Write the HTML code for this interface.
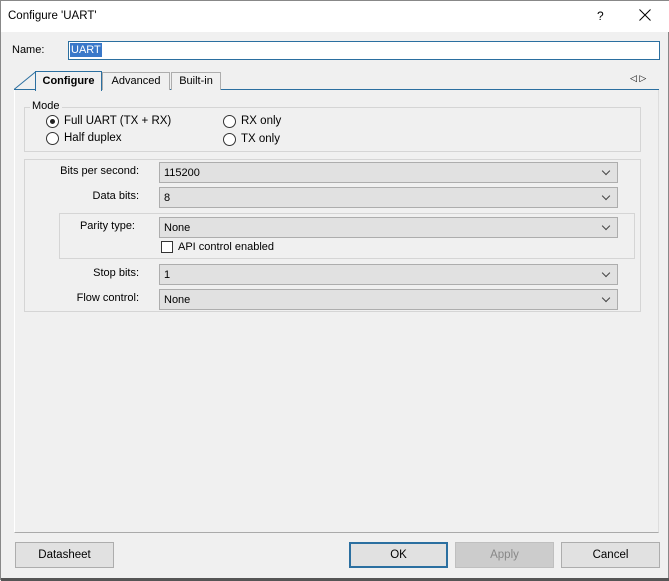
<!DOCTYPE html>
<html><head><style>
*{box-sizing:border-box;margin:0;padding:0}
body{width:669px;height:580px;overflow:hidden;background:#f0f0f0;font-family:"Liberation Sans",sans-serif;font-size:11.5px;color:#000;position:relative;border:1px solid #888}
.a{position:absolute}
.combo{position:absolute;left:158px;width:459px;height:21px;background:#e1e1e1;border:1px solid #adadad;padding:4px 0 0 4px;font-size:11px}
.combo:after{content:"";position:absolute;right:8px;top:5px;width:5px;height:5px;border-right:1px solid #444;border-bottom:1px solid #444;transform:rotate(45deg)}
.lbl{position:absolute;text-align:right;width:130px;left:8px;font-size:11px}
.radio{position:absolute;width:13px;height:13px;border:1px solid #333;border-radius:50%;background:#fff}
.btn{position:absolute;top:541px;height:26px;width:99px;background:#e1e1e1;border:1px solid #adadad;text-align:center;padding-top:6px;font-size:11.5px}
</style></head><body>
<div class="a" style="left:0;top:0;width:669px;height:31px;background:#fff"></div>
<div class="a" style="left:7px;top:9px;font-size:11.5px">Configure 'UART'</div>
<div class="a" style="left:596px;top:8px;font-size:12px">?</div>
<svg class="a" style="left:638px;top:8px" width="12" height="12"><path d="M0.5 0.5L11.5 11.5M11.5 0.5L0.5 11.5" stroke="#000" stroke-width="1"/></svg>
<div class="a" style="left:11px;top:43px;font-size:11px">Name:</div>
<div class="a" style="left:67px;top:40px;width:592px;height:19px;background:#fff;border:1px solid #2b6fa0"></div>
<div class="a" style="left:69px;top:42px;background:#3a78c9;color:#fff;padding:0 1px;height:14px;line-height:14px;font-size:11px">UART</div>
<div class="a" style="left:13px;top:88px;width:645px;height:1px;background:#2b6fa0"></div>
<div class="a" style="left:101px;top:71px;width:68px;height:18px;border:1px solid #adadad;border-bottom:none;background:#f0f0f0;text-align:center;padding-top:2px;font-size:11px">Advanced</div>
<div class="a" style="left:170px;top:71px;width:50px;height:18px;border:1px solid #adadad;border-bottom:none;background:#f0f0f0;text-align:center;padding-top:2px;font-size:11px">Built-in</div>
<div class="a" style="left:34px;top:70px;width:67px;height:20px;border:1px solid #2b6fa0;border-bottom:none;background:#f0f0f0;text-align:center;padding-top:3px;font-weight:bold;font-size:11px">Configure</div>
<svg class="a" style="left:13px;top:70px" width="25" height="20"><line x1="0" y1="18.5" x2="22" y2="0.5" stroke="#2b6fa0"/></svg>
<div class="a" style="left:629px;top:72px;font-size:9px">◁ ▷</div>
<div class="a" style="left:13px;top:89px;width:645px;height:443px;border-left:1px solid #fff;border-right:1px solid #ddd;border-bottom:1px solid #aaa"></div>
<div class="a" style="left:23px;top:106px;width:617px;height:45px;border:1px solid #d5d5d5"></div>
<div class="a" style="left:29px;top:99px;background:#f0f0f0;padding:0 2px;font-size:11px">Mode</div>
<div class="radio" style="left:45px;top:114px"></div><div class="a" style="left:49px;top:118px;width:5px;height:5px;border-radius:50%;background:#222"></div>
<div class="a" style="left:63px;top:114px">Full UART (TX + RX)</div>
<div class="radio" style="left:45px;top:131px"></div><div class="a" style="left:63px;top:131px">Half duplex</div>
<div class="radio" style="left:222px;top:114px"></div><div class="a" style="left:240px;top:114px">RX only</div>
<div class="radio" style="left:222px;top:132px"></div><div class="a" style="left:240px;top:132px">TX only</div>
<div class="a" style="left:23px;top:158px;width:617px;height:153px;border:1px solid #d5d5d5"></div>
<div class="lbl" style="top:164px">Bits per second:</div><div class="combo" style="top:161px">115200</div>
<div class="lbl" style="top:189px">Data bits:</div><div class="combo" style="top:186px">8</div>
<div class="a" style="left:58px;top:212px;width:576px;height:46px;border:1px solid #d5d5d5"></div>
<div class="lbl" style="top:219px;left:4px">Parity type:</div><div class="combo" style="top:216px">None</div>
<div class="a" style="left:160px;top:240px;width:12px;height:12px;border:1px solid #333;background:#fff"></div>
<div class="a" style="left:177px;top:240px;font-size:11px">API control enabled</div>
<div class="lbl" style="top:266px">Stop bits:</div><div class="combo" style="top:263px">1</div>
<div class="lbl" style="top:291px">Flow control:</div><div class="combo" style="top:288px">None</div>
<div class="btn" style="left:14px">Datasheet</div>
<div class="btn" style="left:348px;border:2px solid #2b6fa0;padding-top:5px">OK</div>
<div class="btn" style="left:454px;background:#ccc;border-color:#bfbfbf;color:#888">Apply</div>
<div class="btn" style="left:560px">Cancel</div>
<div class="a" style="left:0;top:577px;width:669px;height:3px;background:#555"></div>
</body></html>
